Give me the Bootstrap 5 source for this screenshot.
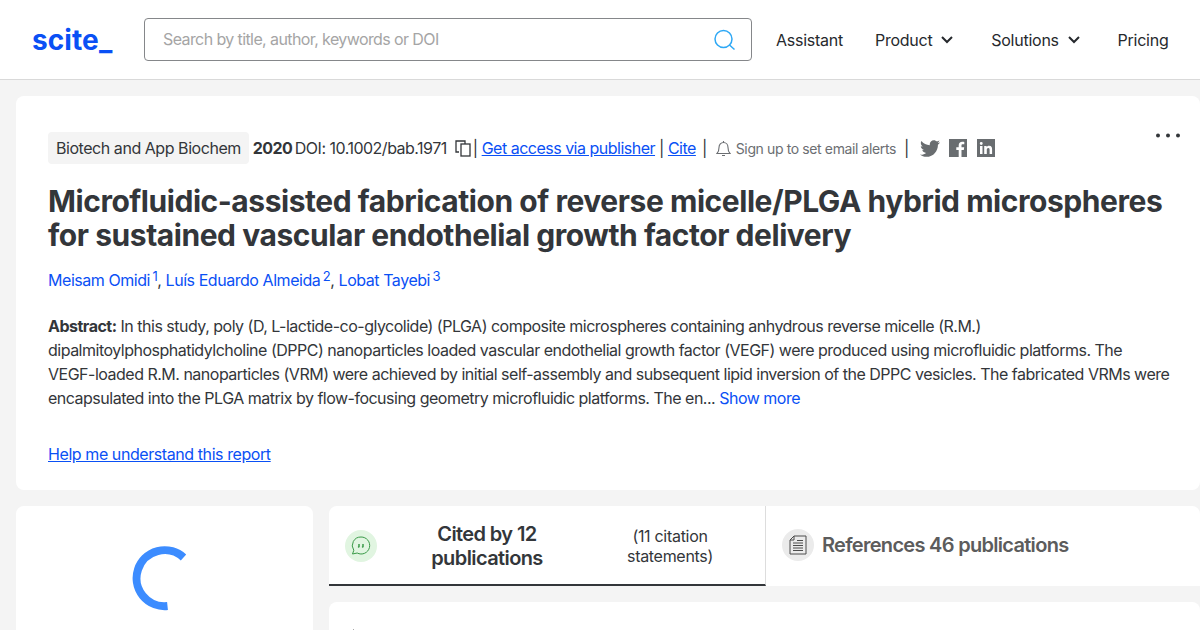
<!DOCTYPE html>
<html lang="en">
<head>
<meta charset="utf-8">
<title>scite</title>
<link rel="stylesheet" href="https://cdn.jsdelivr.net/npm/bootstrap@5.3.0/dist/css/bootstrap.min.css">
<style>
html,body{height:630px;overflow:hidden}
body{background:#f4f4f4;font-family:Inter,"Liberation Sans",sans-serif;color:#33363a;letter-spacing:-.45px}
.topbar{height:80px;background:#fff;border-bottom:1px solid #d9d9d9;padding:0 32px}
.brand{color:#0a50f5;font-size:28px;font-weight:700;width:112px;flex:none;letter-spacing:.1px;text-decoration:none}
.searchbox{width:608px;flex:none;height:43px;border:1px solid #85878a;border-radius:4px;padding:0 16px 0 18px;color:#a5a5a5;font-size:16px;letter-spacing:-.6px}
.searchbox span{padding-bottom:2px}
.menu{margin-left:24px;gap:32px;color:#26292d;font-size:16px;letter-spacing:-.25px}
.withcaret{margin-right:4.800px}
.shell{padding:16px 0 0 16px}
.panel{background:#fff}
.article{height:394px;padding:36px 32px 0;border-radius:8px;position:relative}
.meta{font-size:16px;height:32px;white-space:nowrap}
.journal{background:#f4f4f4;border-radius:4px;padding:0 8px;height:32px;line-height:32px;margin-right:4px}
.yr{margin-right:2.600px;letter-spacing:-.6px}
.doi{letter-spacing:-.5px}
.meta a,.authors a,.helpline a,.abstract a{color:#0a50f5}
.meta a{letter-spacing:-.5px}
.muted-s{color:#6b6e72;font-size:14px;letter-spacing:-.38px;margin-left:5px}
.sep-a{margin-left:1px;margin-right:4px}
.sep-b{margin-left:4px;margin-right:4px}
.sep-c{margin-left:6px;margin-right:9px}
.sep-d{margin-left:8px;margin-right:11px}
.soc-f{margin-left:9px}
.soc-i{margin-left:10px}
.more{position:absolute;right:20px;top:37px}
h1.title{font-size:30px;line-height:34px;font-weight:700;margin:20px 0 0;letter-spacing:-.45px;color:#33363a}
.authors{font-size:16px;margin-top:16px;height:24px;line-height:24px}
.authors a{text-decoration:none}
.authors sup{font-size:13px;margin-left:2.500px;top:-.4em}
.abstract{font-size:16px;line-height:24px;margin:22px -6px 0 0;letter-spacing:-.5px}
.abstract a{text-decoration:none}
.helpline{font-size:16px;margin-top:32px;letter-spacing:-.42px}
.lower{margin-top:16px;gap:16px}
.sidebox{width:297px;height:200px;background:#fff;border-radius:8px;flex:none;padding-top:39px}
.maincol{flex:1;min-width:0}
.tabs{height:80px;background:#fff;border-radius:8px 8px 0 0}
.tab-a{width:437px;border-bottom:2px solid #33363a;border-right:1px solid #ddd;padding:2px 0 0 16px}
.tab-b{padding:0 0 2px 16px;color:#5c5c5c;font-size:20px;font-weight:600;letter-spacing:-.7px}
.dot{width:32px;height:32px;border-radius:50%;flex:none}
.dot-g{background:#e1f5e1}
.dot-n{background:#ebebeb}
.cited{font-size:20px;font-weight:600;line-height:24px;width:220px;text-align:center;letter-spacing:-.6px}
.cited span{display:block}
.stmts{font-size:16px;line-height:20px;width:146px;text-align:center;letter-spacing:-.3px}
.stmts span{display:block}
.listcard{height:60px;background:#fff;border-radius:8px;margin-top:16px;padding:27px 0 0 24px}
.listcard i{display:block;width:1px;height:2px;background:#aaa}
</style>
</head>
<body>
<header class="topbar d-flex align-items-center">
<a class="brand" href="#">scite_</a>
<div class="searchbox d-flex align-items-center justify-content-between">
<span>Search by title, author, keywords or DOI</span>
<svg width="22" height="22" viewBox="0 0 22 22" fill="none" stroke="#2ea8f5" stroke-width="1.5"><circle cx="10.500" cy="10" r="8.500"/><path d="M16.500 16l5 4.500"/></svg>
</div>
<nav class="menu d-flex align-items-center">
<span>Assistant</span>
<span class="withcaret d-flex align-items-center gap-2">Product <svg width="14" height="10" viewBox="0 0 14 10" fill="none" stroke="#26292d" stroke-width="2"><path d="M2 2l5 5 5-5"/></svg></span>
<span class="withcaret d-flex align-items-center gap-2">Solutions <svg width="14" height="10" viewBox="0 0 14 10" fill="none" stroke="#26292d" stroke-width="2"><path d="M2 2l5 5 5-5"/></svg></span>
<span>Pricing</span>
</nav>
</header>
<main class="shell">
<section class="panel article">
<div class="meta d-flex align-items-center">
<span class="journal">Biotech and App Biochem</span>
<b class="yr">2020</b><span class="doi">DOI: 10.1002/bab.1971</span>
<svg class="ms-2" width="17" height="17" viewBox="0 0 17 17" fill="none" stroke="#33363a" stroke-width="1.300"><path d="M4 12H1V1h9v3"/><rect x="6" y="4" width="9" height="12"/></svg>
<span class="sep-a">|</span><a href="#">Get access via publisher</a><span class="sep-b">|</span><a href="#">Cite</a>
<span class="sep-c">|</span>
<svg width="15" height="17" viewBox="0 0 15 17" fill="none" stroke="#6b6e72" stroke-width="1.100"><path d="M1 13.500c1.500-1.500 2-3 2-6 0-3 2-5 4.500-5s4.500 2 4.500 5c0 3 .5 4.500 2 6zM6 15.500h3M7.500 1v1.500"/></svg>
<span class="muted-s">Sign up to set email alerts</span>
<span class="sep-d">|</span>
<svg width="20" height="17" viewBox="0 0 24 20" fill="#696d70"><path d="M24 2.400c-.9.400-1.800.7-2.800.8 1-.6 1.800-1.600 2.200-2.700-1 .6-2 1-3.100 1.200C19.300.7 18 0 16.600 0c-2.700 0-4.900 2.200-4.900 4.900 0 .4 0 .8.100 1.100C7.700 5.800 4.100 3.900 1.700.9 1.200 1.600 1 2.500 1 3.400c0 1.700.9 3.200 2.200 4.100-.8 0-1.600-.2-2.200-.6v.1c0 2.400 1.700 4.400 3.900 4.800-.7.200-1.500.2-2.200.1.600 2 2.400 3.400 4.600 3.400-1.700 1.300-3.800 2.100-6.100 2.100-.4 0-.8 0-1.200-.1C2.200 19.300 4.800 20 7.500 20c9.100 0 14-7.500 14-14v-.6c1-.7 1.800-1.600 2.500-3z"/></svg>
<svg class="soc-f" width="18" height="18" viewBox="0 0 18 18"><rect width="18" height="18" fill="#696d70"/><path fill="#fff" d="M12.500 18v-7h2.300l.4-2.700h-2.700V6.600c0-.8.200-1.300 1.300-1.300h1.500V2.900c-.3 0-1.100-.1-2.100-.1-2.100 0-3.500 1.300-3.500 3.600v1.900H7.300V11h2.400v7z"/></svg>
<svg class="soc-i" width="18" height="18" viewBox="0 0 18 18"><rect width="18" height="18" fill="#696d70"/><path fill="#fff" d="M3 7h2.500v8H3zM4.250 3a1.400 1.400 0 1 1 0 2.900 1.400 1.400 0 0 1 0-2.900zM7.200 7h2.400v1.100c.4-.7 1.300-1.300 2.500-1.300 2.600 0 3 1.700 3 3.900V15h-2.500v-3.800c0-.9 0-2.200-1.300-2.200s-1.500 1-1.500 2.100V15H7.200z"/></svg>
</div>
<svg class="more" width="25" height="5" viewBox="0 0 25 5" fill="#33363a"><circle cx="3" cy="2.500" r="2"/><circle cx="13" cy="2.500" r="2"/><circle cx="23" cy="2.500" r="2"/></svg>
<h1 class="title">Microfluidic-assisted fabrication of reverse micelle/PLGA hybrid microspheres for sustained vascular endothelial growth factor delivery</h1>
<div class="authors"><a href="#">Meisam Omidi<sup>1</sup></a>, <a href="#">Luís Eduardo Almeida<sup>2</sup></a>, <a href="#">Lobat Tayebi<sup>3</sup></a></div>
<p class="abstract mb-0"><b>Abstract:</b> In this study, poly (D, L-lactide-co-glycolide) (PLGA) composite microspheres containing anhydrous reverse micelle (R.M.) dipalmitoylphosphatidylcholine (DPPC) nanoparticles loaded vascular endothelial growth factor (VEGF) were produced using microfluidic platforms. The <span class="text-nowrap">VEGF-loaded</span> R.M. nanoparticles (VRM) were achieved by initial self-assembly and subsequent lipid inversion of the DPPC vesicles. The fabricated VRMs were encapsulated into the PLGA matrix by flow-focusing geometry microfluidic platforms. The en... <a href="#">Show more</a></p>
<p class="helpline mb-0"><a href="#">Help me understand this report</a></p>
</section>
<div class="lower d-flex">
<aside class="sidebox d-flex justify-content-center">
<svg width="66" height="66" viewBox="0 0 66 66" fill="none" stroke="#3c8cff" stroke-width="8"><path d="M51.500 12.500A28 28 0 1 0 35.500 61"/></svg>
</aside>
<div class="maincol">
<div class="tabs d-flex">
<div class="tab-a d-flex align-items-center">
<span class="dot dot-g d-flex align-items-center justify-content-center"><svg width="20" height="20" viewBox="0 0 20 20" fill="none" stroke="#3a9a48" stroke-width="1"><path d="M10 1a8.500 8.500 0 1 1-3.800 16L1.500 18l1.300-3.700A8.500 8.500 0 0 1 10 1z"/><path stroke-width="1.500" d="M8 8v2.500l-.7 1M12 8v2.500l-.7 1"/></svg></span>
<div class="cited"><span>Cited by 12</span><span>publications</span></div>
<div class="stmts"><span>(11 citation</span><span>statements)</span></div>
</div>
<div class="tab-b d-flex align-items-center gap-2">
<span class="dot dot-n d-flex align-items-center justify-content-center"><svg width="18" height="20" viewBox="0 0 18 20" fill="none" stroke="#4c4c4c" stroke-width="1"><path d="M5 1h12v18H1V5zM5 1v4H1"/><path d="M4 8h10M4 10.500h10M4 13h10M4 15.500h10M8 5.500h6"/></svg></span>
<span>References 46 publications</span>
</div>
</div>
<div class="listcard"><i></i></div>
</div>
</div>
</main>
</body>
</html>
